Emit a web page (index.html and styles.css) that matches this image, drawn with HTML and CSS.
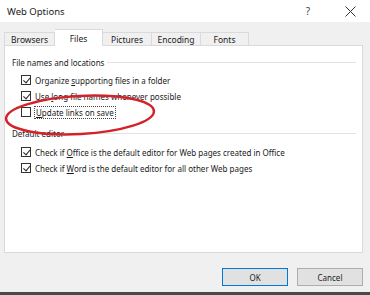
FILE: index.html
```html
<!DOCTYPE html>
<html lang="en">
<head>
    <meta charset="UTF-8">
    <title>Web Options</title>
    <link rel="stylesheet" href="styles.css">
</head>
<body>

<div class="dialog">
    <div class="titlebar">
        <span class="title">Web Options</span>
        <span class="help">?</span>
        <svg class="close" width="11" height="11" viewBox="0 0 11 11">
            <path d="M0.5 0.5 L10.5 10.5 M10.5 0.5 L0.5 10.5" stroke="#333" stroke-width="1" fill="none"/>
        </svg>
    </div>

    <div class="content">
        <div class="tabs">
            <div class="tab">Browsers</div>
            <div class="tab active">Files</div>
            <div class="tab">Pictures</div>
            <div class="tab">Encoding</div>
            <div class="tab">Fonts</div>
        </div>

        <div class="panel">
            <div class="group-title"><span>File names and locations</span></div>
            <label class="row"><span class="box checked"></span><span>Organize <u>s</u>upporting files in a folder</span></label>
            <label class="row"><span class="box checked"></span><span>Use <u>l</u>ong file names whenever possible</span></label>
            <label class="row"><span class="box"></span><span class="focus"><u>U</u>pdate links on save</span></label>

            <div class="group-title second"><span>Default editor</span></div>
            <label class="row"><span class="box checked"></span><span>Check if <u>O</u>ffice is the default editor for Web pages created in Office</span></label>
            <label class="row"><span class="box checked"></span><span>Check if <u>W</u>ord is the default editor for all other Web pages</span></label>

            <!-- red ring drawn over the screenshot -->
            <svg class="ring" width="160" height="44" viewBox="0 0 160 44">
                <ellipse cx="78" cy="22" rx="74" ry="19" transform="rotate(-3 78 22)" fill="none" stroke="#d2232a" stroke-width="2.5"/>
            </svg>
        </div>

        <div class="footer">
            <button class="btn default">OK</button>
            <button class="btn">Cancel</button>
        </div>
    </div>

    <div class="taskbar"></div>
</div>

</body>
</html>
```

FILE: styles.css
```css
body {
    margin: 0;
    padding: 0;
    font-family: "Noto Sans", "Open Sans", sans-serif;
    color: #1a1a1a;
}
.dialog {
    width: 370px;
    height: 295px;
    display: flex;
    flex-direction: column;
    background-color: #f0f0f0;
    overflow: hidden;
}
.titlebar {
    height: 22px;
    background-color: white;
    display: flex;
    align-items: center;
    padding-left: 7px;
    box-sizing: border-box;
}
.title {
    font-size: 9.5px;
    flex: 1;
}
.help {
    font-size: 10px;
    color: #444;
    margin-right: 35px;
}
.close {
    margin-right: 14px;
}
.content {
    flex: 1;
    display: flex;
    flex-direction: column;
    padding: 0 7px 0 4px;
}
.tabs {
    display: flex;
    align-items: flex-end;
    height: 23px;
}
.tab {
    height: 14px;
    box-sizing: border-box;
    border: 1px solid #dadada;
    border-bottom: none;
    border-left: none;
    font-size: 8.5px;
    display: flex;
    align-items: center;
    justify-content: center;
    color: #222;
    position: relative;
    top: 1px;
}
.tab:first-child {
    border-left: 1px solid #dadada;
    width: 51px;
}
.tab:nth-child(2) { width: 48px; }
.tab:nth-child(3) { width: 49px; }
.tab:nth-child(4) { width: 49px; }
.tab:nth-child(5) { width: 48px; }
.tab.active {
    height: 17px;
    background-color: white;
    z-index: 1;
    align-items: flex-start;
    padding-top: 3px;
}
.panel {
    height: 208px;
    box-sizing: border-box;
    background-color: white;
    border: 1px solid #dadada;
    position: relative;
    padding: 10px 6px 0 7px;
}
.group-title {
    display: flex;
    align-items: center;
    font-size: 8px;
    height: 12px;
    margin-bottom: 4px;
}
.group-title::after {
    content: "";
    flex: 1;
    border-top: 1px solid #e3e3e3;
    margin-left: 3px;
}
.group-title.second {
    margin-top: 7px;
    margin-bottom: 5px;
}
.row {
    display: flex;
    align-items: center;
    height: 16px;
    padding-left: 9px;
    font-size: 8px;
    gap: 4px;
}
.box {
    width: 10px;
    height: 10px;
    box-sizing: border-box;
    border: 1px solid #333;
    background-color: white;
    position: relative;
}
.box.checked::after {
    content: "";
    position: absolute;
    left: 2.5px;
    top: 0px;
    width: 3px;
    height: 5.5px;
    border-right: 1px solid #222;
    border-bottom: 1px solid #222;
    transform: rotate(40deg);
}
.focus {
    outline: 1px dotted #444;
    padding: 0 1px;
}
u {
    text-decoration-thickness: 1px;
}
.ring {
    position: absolute;
    left: -3px;
    top: 47px;
}
.footer {
    height: 39px;
    display: flex;
    justify-content: flex-end;
    align-items: flex-start;
    padding-top: 15px;
    box-sizing: border-box;
    gap: 9px;
}
.btn {
    width: 66px;
    height: 18px;
    font-family: "Noto Sans", sans-serif;
    font-size: 8px;
    background-color: #e1e1e1;
    border: 1px solid #adadad;
    padding: 0;
    color: #222;
}
.btn.default {
    border-color: #0078d7;
}
.taskbar {
    height: 3px;
    background-color: #4a4a4a;
}
```
